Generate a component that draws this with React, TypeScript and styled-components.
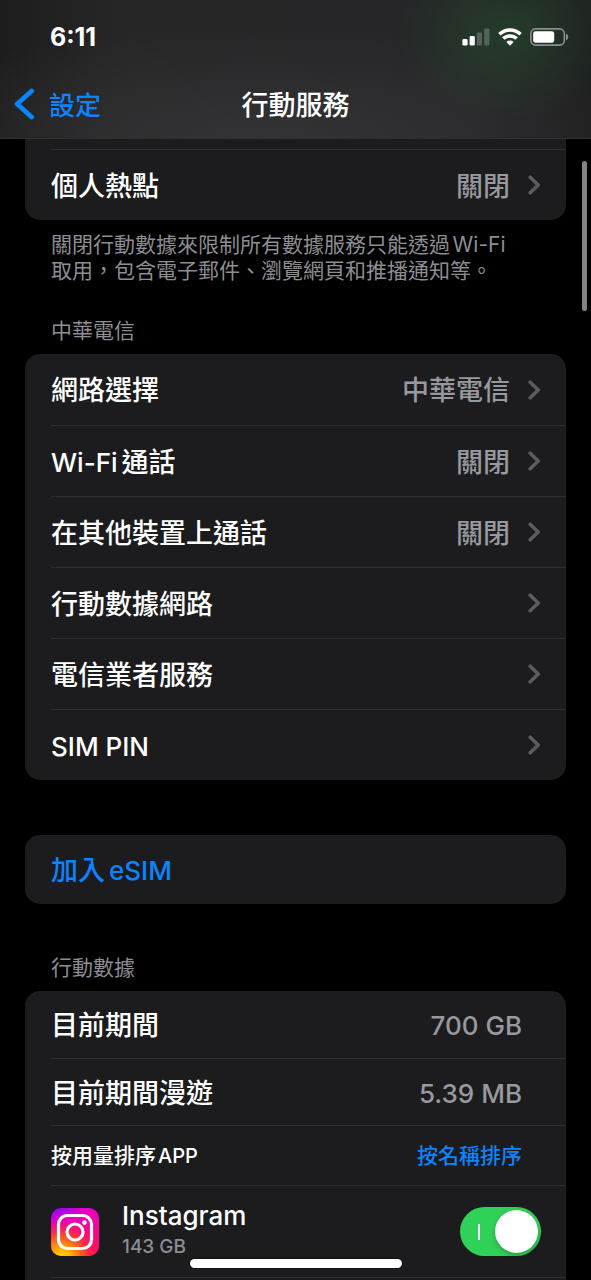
import React from "react";
import styled, { createGlobalStyle } from "styled-components";

const GlobalStyle = createGlobalStyle`
  *, *::before, *::after { box-sizing: border-box; }
  body {
    margin: 0;
    background: #000;
    color: #fff;
    font-family: Inter, "Noto Sans CJK TC", sans-serif;
    font-size: 27px;
    font-weight: 500;
  }
  button, input { font: inherit; color: inherit; }
  h1, h2, p, ul { margin: 0; padding: 0; }
  ul { list-style: none; }
`;

const Screen = styled.div`
  position: relative;
  display: flex;
  flex-direction: column;
  height: 100vh;
  overflow: hidden;
`;

const Header = styled.header`
  flex: none;
  border-bottom: 1px solid #303032;
  background:
    radial-gradient(ellipse 110px 85px at 86% 24%, rgba(36, 74, 44, 0.65), transparent),
    radial-gradient(ellipse 70% 110px at 44% 100%, rgba(60, 60, 62, 0.6), transparent),
    linear-gradient(90deg, #1d1d1e, #262627 20%, #262628 80%, #1f1f20);
`;

const StatusBar = styled.div`
  display: flex;
  align-items: center;
  justify-content: space-between;
  height: 70px;
  padding: 4px 22px 0 50px;
`;

const Clock = styled.time`
  font-size: 25px;
  font-weight: 700;
  line-height: 32px;
`;

const StatusIcons = styled.div`
  display: flex;
  align-items: center;
  gap: 8px;
`;

const NavBar = styled.nav`
  display: grid;
  grid-template-columns: 1fr auto 1fr;
  align-items: center;
  height: 68px;
  padding: 0 14px;
`;

const BackButton = styled.button`
  display: flex;
  align-items: center;
  gap: 14px;
  padding: 0;
  border: 0;
  background: none;
  color: #0b84ff;
  font-size: 26px;
  font-weight: 500;
  line-height: 36px;
  cursor: pointer;
`;

const BackLabel = styled.span`
  padding-top: 4px;
`;

const Title = styled.h1`
  padding-top: 4px;
  font-size: 27px;
  font-weight: 500;
  line-height: 40px;
`;

const Content = styled.main`
  flex: 1;
  min-height: 0;
  overflow: hidden;
  padding: 0 25px;
`;

const Card = styled.ul<{ $continued?: boolean }>`
  overflow: hidden;
  border-radius: ${(p) => (p.$continued ? "0 0 15px 15px" : "15px")};
  background: #1c1c1e;
`;

const Row = styled.li<{ $height: number; $end?: number }>`
  display: flex;
  align-items: center;
  height: ${(p) => p.$height}px;
  margin-left: 26px;
  padding-right: ${(p) => p.$end ?? 25}px;
  line-height: 36px;
  & + & { border-top: 1px solid #2e2e31; }
`;

const RowLink = styled.a`
  display: flex;
  flex: 1;
  align-items: center;
  height: 100%;
  gap: 18px;
  color: inherit;
  text-decoration: none;
`;

const Label = styled.span<{ $small?: boolean }>`
  flex: 1;
  padding-top: ${(p) => (p.$small ? 0 : 3)}px;
  font-size: ${(p) => (p.$small ? 21 : 27)}px;
`;

const Latin = styled.span<{ $small?: boolean; $before?: boolean; $after?: boolean }>`
  margin-left: ${(p) => (p.$before ? (p.$small ? 2 : 4) : 0)}px;
  margin-right: ${(p) => (p.$after ? 4 : 0)}px;
  font-size: ${(p) => (p.$small ? 20 : 26)}px;
`;

const Value = styled.span`
  padding-top: 3px;
  color: #98989f;
`;

const TextButton = styled.button<{ $small?: boolean }>`
  padding: ${(p) => (p.$small ? 0 : 3)}px 0 0;
  border: 0;
  background: none;
  color: #0b84ff;
  font-size: ${(p) => (p.$small ? 21 : 27)}px;
  font-weight: 500;
  line-height: 36px;
  text-align: left;
  cursor: pointer;
`;

const Footnote = styled.p`
  padding: 12px 52px 0 26px;
  color: #8d8d93;
  font-size: 21px;
  font-weight: 400;
  line-height: 26px;
  text-autospace: normal;
`;

const SectionTitle = styled.h2<{ $gap: number }>`
  padding: ${(p) => p.$gap}px 26px 10px;
  color: #8d8d93;
  font-size: 21px;
  font-weight: 400;
  line-height: 26px;
`;

const StandaloneCard = styled(Card)`
  margin-top: 55px;
`;

const AppInfo = styled.label`
  display: flex;
  flex: 1;
  flex-direction: column;
  padding: 0 0 3px 23px;
`;

const AppName = styled.span`
  font-size: 26px;
  line-height: 34px;
`;

const AppUsage = styled.span`
  color: #8d8d93;
  font-size: 19px;
  line-height: 28px;
`;

const Switch = styled.input`
  position: relative;
  width: 81px;
  height: 49px;
  margin: 0;
  border-radius: 25px;
  background: #39393d;
  appearance: none;
  cursor: pointer;
  &::before {
    content: "";
    position: absolute;
    top: 3px;
    left: 3px;
    width: 43px;
    height: 43px;
    border-radius: 50%;
    background: #fff;
    box-shadow: 0 2px 5px rgba(0, 0, 0, 0.25);
  }
  &:checked { background: #30d158; }
  &:checked::before { left: 35px; }
  &:checked::after {
    content: "";
    position: absolute;
    top: 17px;
    left: 18px;
    width: 2px;
    height: 16px;
    background: #fff;
  }
`;

const ScrollThumb = styled.div`
  position: absolute;
  top: 161px;
  right: 4px;
  width: 5px;
  height: 150px;
  border-radius: 3px;
  background: #848486;
`;

const HomeIndicator = styled.div`
  position: absolute;
  bottom: 12px;
  left: 50%;
  width: 212px;
  height: 9px;
  margin-left: -106px;
  border-radius: 5px;
  background: #fff;
  box-shadow: 0 0 2px #000;
`;

const SignalIcon = () => (
  <svg width="28" height="18" viewBox="0 0 28 18" fill="#fff" aria-hidden="true">
    <rect x="0.4" y="11" width="5.2" height="6.6" rx="1.4" />
    <rect x="7.6" y="8" width="5.2" height="9.6" rx="1.4" />
    <rect x="14.8" y="4.4" width="5.2" height="13.2" rx="1.4" opacity=".22" />
    <rect x="22.2" y="0.4" width="5.2" height="17.2" rx="1.4" opacity=".22" />
  </svg>
);

const WifiIcon = () => (
  <svg width="24" height="18" viewBox="0 0 24 18" aria-hidden="true">
    <g fill="none" stroke="#fff" strokeWidth="3.5">
      <path d="M1.4 6.3a15.2 15.2 0 0 1 21.2 0" />
      <path d="M5.3 10.6a9.7 9.7 0 0 1 13.4 0" />
    </g>
    <path d="M12 17.7l-3.6-3.7a5.2 5.2 0 0 1 7.2 0z" fill="#fff" />
  </svg>
);

const BatteryIcon = () => (
  <svg width="39" height="18" viewBox="0 0 39 18" aria-hidden="true">
    <rect x="0.9" y="0.9" width="33.4" height="16.2" rx="4.6" fill="none" stroke="#8b8e8d" strokeWidth="1.6" />
    <rect x="3.2" y="3.2" width="21" height="11.6" rx="2.4" fill="#fff" />
    <path d="M36 5.8c1.5.6 2.2 1.7 2.2 3.2s-.7 2.6-2.2 3.2z" fill="#8b8e8d" />
  </svg>
);

const BackIcon = () => (
  <svg width="21" height="32" viewBox="0 0 21 32" aria-hidden="true">
    <path d="M17.6 3L3.2 16l14.4 13" fill="none" stroke="#0b84ff" strokeWidth="4.8" strokeLinecap="round" strokeLinejoin="round" />
  </svg>
);

const Chevron = () => (
  <svg width="13" height="20" viewBox="0 0 13 20" aria-hidden="true">
    <path d="M2.2 2.2L10.2 10l-8 7.8" fill="none" stroke="#5b5b60" strokeWidth="3.6" strokeLinecap="round" strokeLinejoin="round" />
  </svg>
);

const InstagramIcon = () => (
  <svg width="48" height="48" viewBox="0 0 48 48" aria-hidden="true">
    <defs>
      <linearGradient id="igBase" x1="0" y1="0" x2="0.4" y2="1">
        <stop offset="0" stopColor="#7a0cff" />
        <stop offset="0.28" stopColor="#e600c8" />
        <stop offset="1" stopColor="#ff0a6c" />
      </linearGradient>
      <radialGradient id="igWarm" cx="0.22" cy="1.05" r="0.85">
        <stop offset="0" stopColor="#ffd600" />
        <stop offset="0.25" stopColor="#ffb000" />
        <stop offset="0.6" stopColor="#ff4a1c" stopOpacity="0.85" />
        <stop offset="1" stopColor="#ff0069" stopOpacity="0" />
      </radialGradient>
    </defs>
    <rect width="48" height="48" rx="10" fill="url(#igBase)" />
    <rect width="48" height="48" rx="10" fill="url(#igWarm)" />
    <g fill="none" stroke="#fff" strokeWidth="3.2">
      <rect x="7.5" y="7.5" width="33" height="33" rx="9" />
      <circle cx="24" cy="24" r="8" />
    </g>
    <circle cx="33.5" cy="14.6" r="2.3" fill="#fff" />
  </svg>
);

const LinkRow = ({ label, value }: { label: React.ReactNode; value?: string }) => (
  <Row $height={71}>
    <RowLink href="#">
      <Label>{label}</Label>
      {value && <Value>{value}</Value>}
      <Chevron />
    </RowLink>
  </Row>
);

export default function App() {
  return (
    <Screen lang="zh-Hant-TW">
      <GlobalStyle />
      <Header>
        <StatusBar>
          <Clock>6:11</Clock>
          <StatusIcons>
            <SignalIcon />
            <WifiIcon />
            <BatteryIcon />
          </StatusIcons>
        </StatusBar>
        <NavBar>
          <BackButton type="button">
            <BackIcon />
            <BackLabel>設定</BackLabel>
          </BackButton>
          <Title>行動服務</Title>
        </NavBar>
      </Header>

      <Content>
        <Card $continued>
          <Row $height={10} />
          <LinkRow label="個人熱點" value="關閉" />
        </Card>
        <Footnote>關閉行動數據來限制所有數據服務只能透過Wi-Fi取用，包含電子郵件、瀏覽網頁和推播通知等。</Footnote>

        <SectionTitle $gap={34}>中華電信</SectionTitle>
        <Card>
          <LinkRow label="網路選擇" value="中華電信" />
          <LinkRow label={<><Latin $after>Wi-Fi</Latin>通話</>} value="關閉" />
          <LinkRow label="在其他裝置上通話" value="關閉" />
          <LinkRow label="行動數據網路" />
          <LinkRow label="電信業者服務" />
          <LinkRow label={<Latin>SIM PIN</Latin>} />
        </Card>

        <StandaloneCard>
          <Row $height={69}>
            <TextButton type="button">加入<Latin $before>eSIM</Latin></TextButton>
          </Row>
        </StandaloneCard>

        <SectionTitle $gap={51}>行動數據</SectionTitle>
        <Card>
          <Row $height={67} $end={44}>
            <Label>目前期間</Label>
            <Value><Latin>700 GB</Latin></Value>
          </Row>
          <Row $height={67} $end={44}>
            <Label>目前期間漫遊</Label>
            <Value><Latin>5.39 MB</Latin></Value>
          </Row>
          <Row $height={60} $end={44}>
            <Label $small>按用量排序<Latin $small $before>APP</Latin></Label>
            <TextButton type="button" $small>按名稱排序</TextButton>
          </Row>
          <Row $height={92}>
            <InstagramIcon />
            <AppInfo htmlFor="instagram-data">
              <AppName>Instagram</AppName>
              <AppUsage>143 GB</AppUsage>
            </AppInfo>
            <Switch id="instagram-data" type="checkbox" role="switch" defaultChecked />
          </Row>
          <Row $height={92} />
        </Card>
      </Content>

      <ScrollThumb />
      <HomeIndicator />
    </Screen>
  );
}
